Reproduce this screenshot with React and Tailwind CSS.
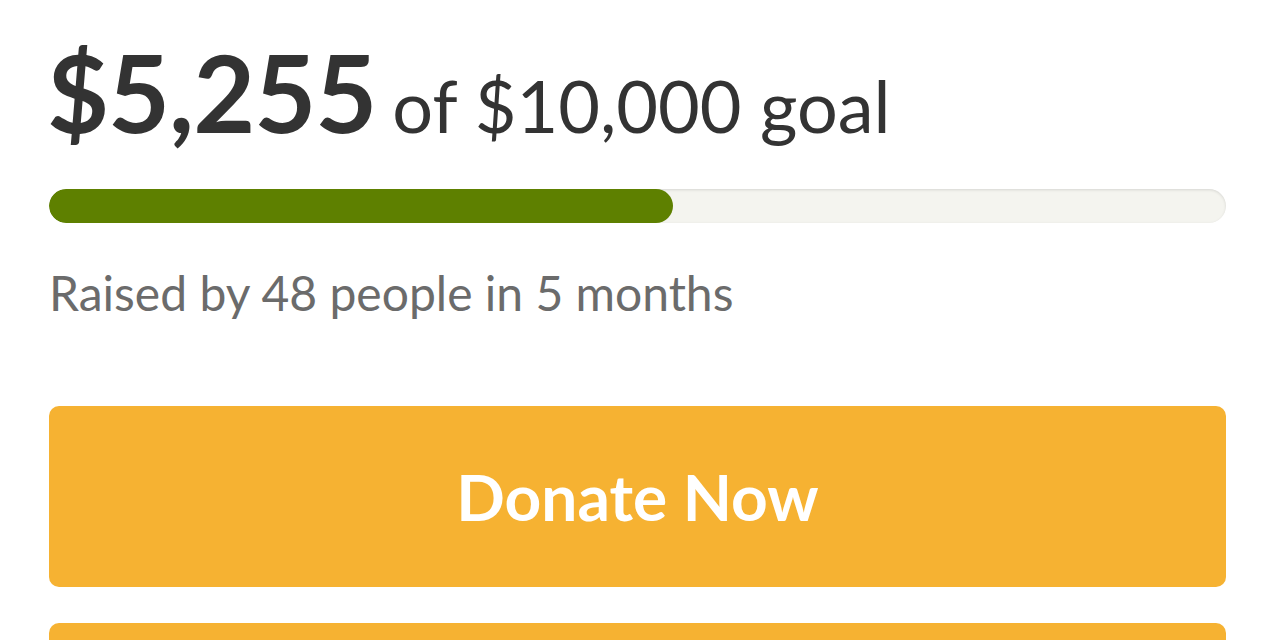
export default function App() {
  const raised = 5255;
  const goal = 10000;
  const pct = Math.ceil((raised / goal) * 100);

  return (
    <div className="w-[1280px] h-[640px] overflow-hidden bg-white font-['Lato',sans-serif]">
      <div className="ml-[49px] w-[1177px] flex flex-col">
        <h2 className="mt-[32px] flex items-baseline text-[#333333] leading-[120px]">
          <span className="text-[107px] font-bold tracking-[-1px] -ml-[2px]">$5,255</span>
          <span className="ml-[16px] text-[72px] font-normal">of $10,000 goal</span>
        </h2>

        <div className="mt-[24px] h-[34px] w-full rounded-full bg-[#f4f4ef] shadow-[inset_0_1px_3px_rgba(0,0,0,0.12)] overflow-hidden">
          <div className="h-full rounded-full bg-[#5e8000]" style={{ width: `${pct}%` }} />
        </div>

        <p className="mt-[42px] text-[48px] leading-[56px] text-[#6b6b6b]">
          Raised by 48 people in 5 months
        </p>

        <button className="mt-[85px] h-[181px] w-full rounded-[10px] bg-[#f6b232] text-white text-[64px] font-bold">
          Donate Now
        </button>
        <div className="mt-[36px] h-[181px] w-full rounded-[10px] bg-[#f6b232]" />
      </div>
    </div>
  );
}
